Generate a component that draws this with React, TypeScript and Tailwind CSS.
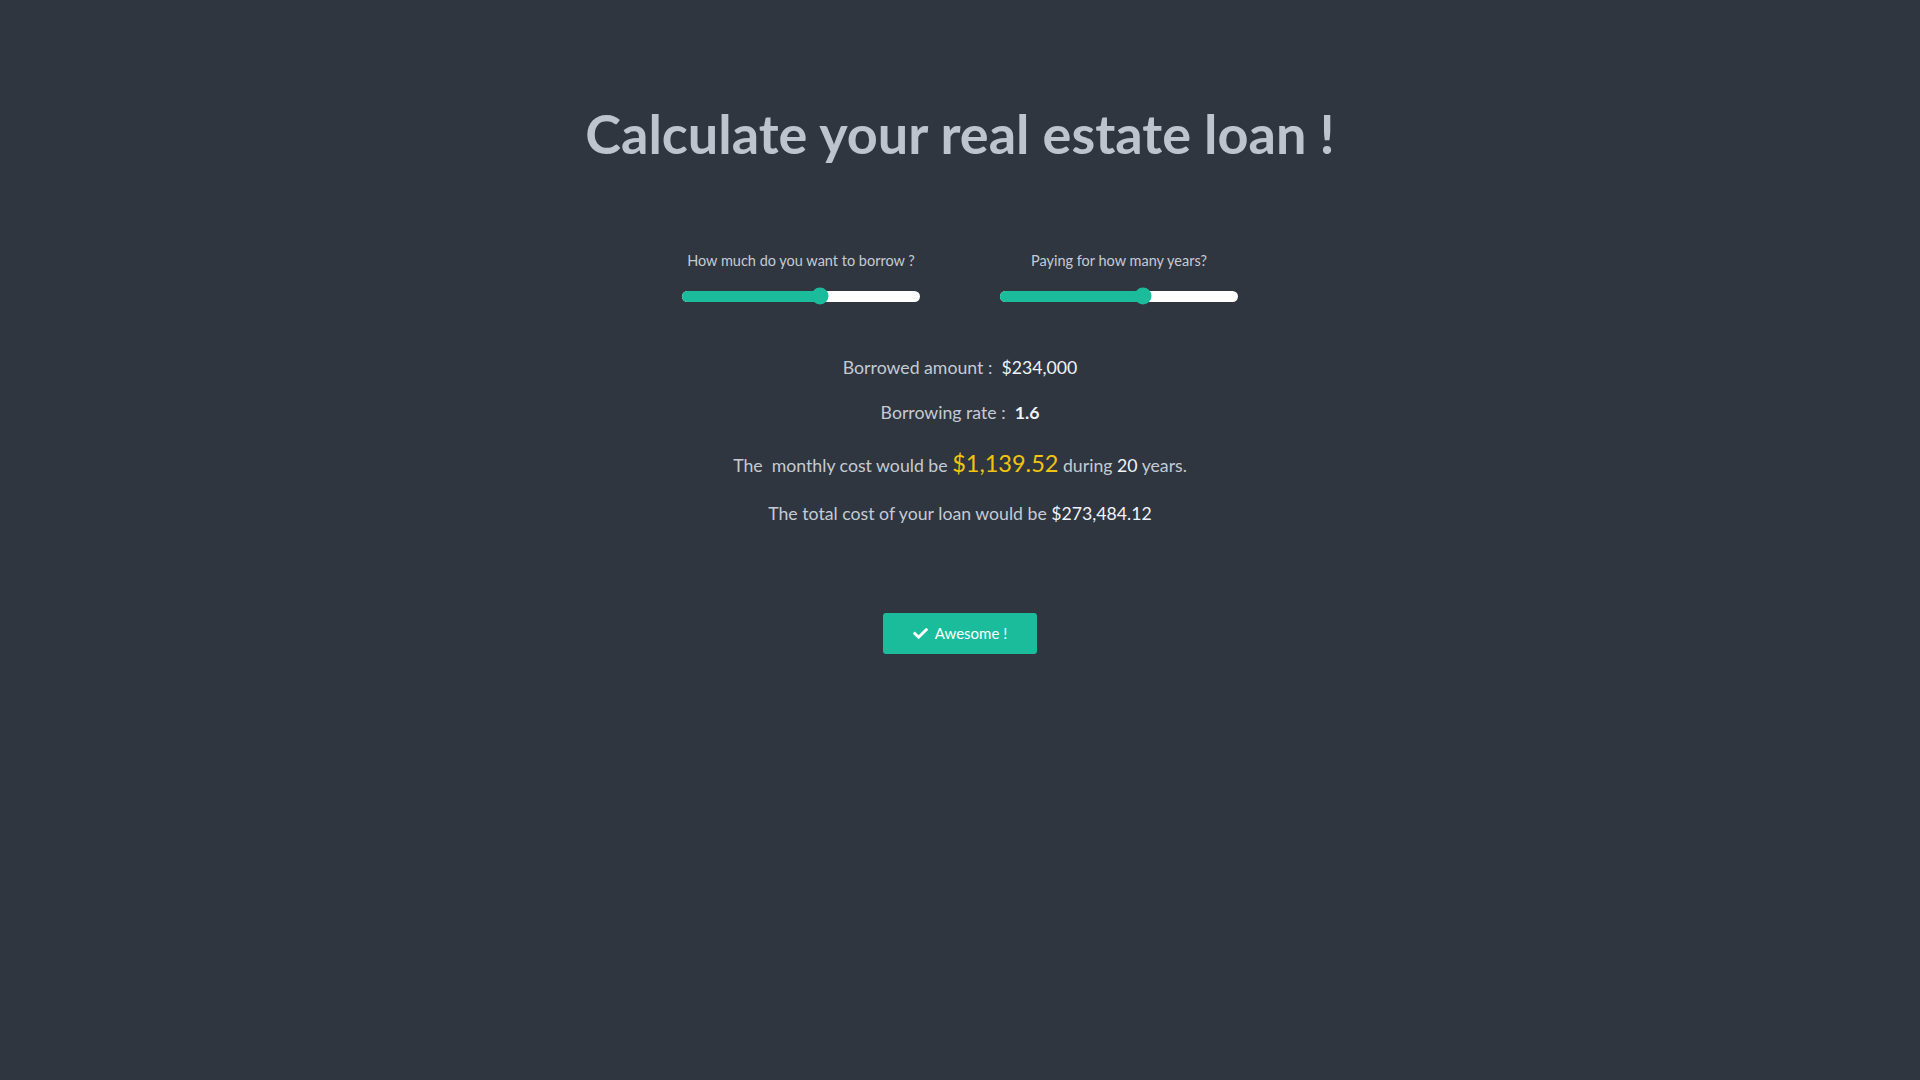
import React from "react";
import { FaCheck } from "react-icons/fa";

const Slider = ({ label, percent }: { label: string; percent: number }) => {
  return (
    <div className="flex flex-col items-center w-[238px]">
      <span className="text-[14.5px] text-[#c5cbd3] leading-none">{label}</span>
      <div className="relative mt-[22px] h-[11px] w-full rounded-full bg-white">
        <div
          className="h-full rounded-full bg-[#1abc9c]"
          style={{ width: `${percent}%` }}
        />
        <div
          className="absolute top-1/2 h-[17px] w-[17px] -translate-x-1/2 -translate-y-1/2 rounded-full bg-[#1abc9c]"
          style={{ left: `${percent}%` }}
        />
      </div>
    </div>
  );
};

const App = () => {
  return (
    <div
      className="min-h-screen w-full bg-[#2f3640] flex flex-col items-center"
      style={{ fontFamily: "Lato, 'Open Sans', sans-serif" }}
    >
      <h1 className="mt-[107px] text-[54px] font-bold leading-none text-[#bec4cd]">
        Calculate your real estate loan !
      </h1>

      <div className="mt-[93px] flex gap-[80px]">
        <Slider label="How much do you want to borrow ?" percent={58} />
        <Slider label="Paying for how many years?" percent={60} />
      </div>

      <div className="mt-[57px] flex flex-col items-center text-[17.7px] text-[#c5cbd3]">
        <p className="leading-none">
          Borrowed amount :&nbsp; <span className="text-[#eef4fa]">$234,000</span>
        </p>
        <p className="mt-[28px] leading-none">
          Borrowing rate :&nbsp; <span className="font-bold text-[#eef4fa]">1.6</span>
        </p>
        <p className="mt-[30px] leading-none">
          The&nbsp; monthly cost would be{" "}
          <span className="text-[23.5px] text-[#f1c40f]">$1,139.52</span> during{" "}
          <span className="text-[#eef4fa]">20</span> years.
        </p>
        <p className="mt-[30px] leading-none">
          The total cost of your loan would be{" "}
          <span className="text-[#eef4fa]">$273,484.12</span>
        </p>
      </div>

      <button className="mt-[90px] flex h-[41px] w-[154px] items-center justify-center gap-[7px] rounded-[3px] bg-[#1abc9c] text-[15px] text-white">
        <FaCheck className="h-[15px] w-[15px]" />
        Awesome !
      </button>
    </div>
  );
};

export default App;
